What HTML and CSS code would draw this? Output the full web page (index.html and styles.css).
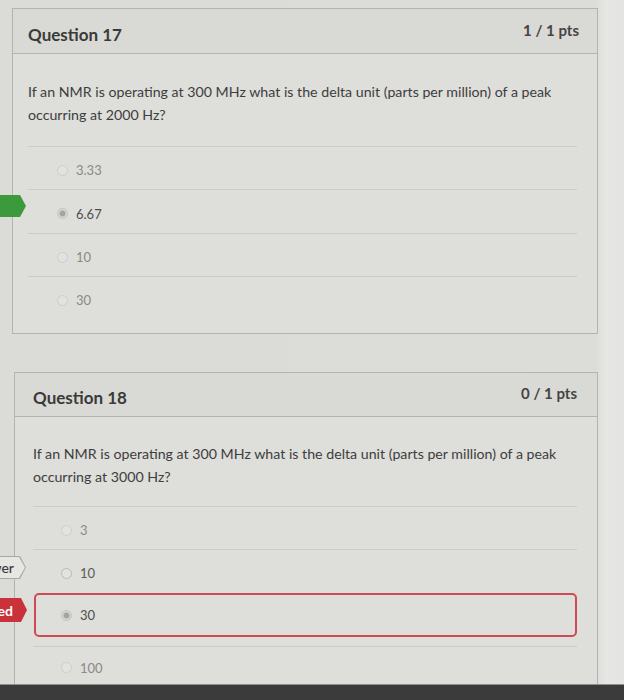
FILE: index.html
```html
<!DOCTYPE html>
<html>
<head>
<meta charset="utf-8">
<link rel="stylesheet" href="styles.css">
</head>
<body>
<div class="screen">
  <div class="page">
    <section class="card q17">
      <div class="tag tag-correct"><span>Correct!</span></div>
      <header class="card-head">
        <h2 class="title">Question 17</h2>
        <div class="pts">1 / 1 pts</div>
      </header>
      <div class="card-body">
        <p class="question">If an NMR is operating at 300 MHz what is the delta unit (parts per million) of a peak occurring at 2000 Hz?</p>
        <ul class="answers">
          <li class="answer"><span class="radio"></span><span class="label">3.33</span></li>
          <li class="answer selected"><span class="radio"></span><span class="label">6.67</span></li>
          <li class="answer"><span class="radio"></span><span class="label">10</span></li>
          <li class="answer"><span class="radio"></span><span class="label">30</span></li>
        </ul>
      </div>
    </section>

    <section class="card q18">
      <div class="tag tag-answer"><div class="tag-inner"><span>Correct Answer</span></div></div>
      <div class="tag tag-wrong"><span>You Answered</span></div>
      <header class="card-head">
        <h2 class="title">Question 18</h2>
        <div class="pts">0 / 1 pts</div>
      </header>
      <div class="card-body">
        <p class="question">If an NMR is operating at 300 MHz what is the delta unit (parts per million) of a peak occurring at 3000 Hz?</p>
        <ul class="answers">
          <li class="answer"><span class="radio"></span><span class="label">3</span></li>
          <li class="answer dim-none"><span class="radio"></span><span class="label">10</span></li>
          <li class="answer selected wrong"><span class="radio"></span><span class="label">30</span></li>
          <li class="answer"><span class="radio"></span><span class="label">100</span></li>
        </ul>
      </div>
    </section>
  </div>
  <div class="bezel"></div>
</div>
</body>
</html>
```

FILE: styles.css
```css
* { box-sizing: border-box; }
html, body { margin: 0; padding: 0; }
body {
  font-family: Lato, "Open Sans", "Liberation Sans", sans-serif;
  background: #dbdbd7;
  color: #3e3e3e;
}
.screen {
  width: 624px;
  height: 700px;
  display: flex;
  flex-direction: column;
  overflow: hidden;
  background: linear-gradient(to right, #dbdbd7 0, #dcdcd8 596px, #e6e6e4 606px, #e4e4e2 624px);
}
.page {
  flex: 1;
  overflow: hidden;
  display: flex;
  flex-direction: column;
  padding-top: 8px;
}
.bezel {
  height: 16px;
  background: #3a3b3a;
  border-top: 1px solid #8e8f8d;
}
.card {
  position: relative;
  border: 1px solid #b3b3af;
  background: #dededa;
}
.q17 { margin-left: 12px; width: 586px; }
.q18 { margin-left: 14px; width: 584px; margin-top: 38px; }

.card-head {
  display: flex;
  justify-content: space-between;
  align-items: flex-start;
  background: #d9d9d5;
  border-bottom: 1px solid #b3b3af;
}
.q17 .card-head { height: 45px; padding: 0 18px 0 15px; }
.q18 .card-head { height: 44px; padding: 0 20px 0 18px; }
.title {
  margin: 0;
  font-size: 17px;
  font-weight: 700;
  color: #3a3a3a;
  line-height: 20px;
  padding-top: 16px;
}
.pts {
  font-size: 15px;
  font-weight: 700;
  color: #454545;
  line-height: 18px;
  padding-top: 12px;
}
.q18 .title { padding-top: 15px; }
.q18 .pts { padding-top: 11px; }

.question {
  margin: 0;
  font-size: 14.2px;
  line-height: 22.5px;
  color: #3d3d3d;
}
.q17 .card-body { padding: 27px 20px 14px 15px; }
.q18 .card-body { padding: 26px 20px 12px 18px; }
.q17 .question { margin-bottom: 20px; }
.q18 .question { margin-bottom: 18px; }

.answers {
  list-style: none;
  margin: 0;
  padding: 0;
}
.answer {
  position: relative;
  display: flex;
  align-items: center;
  height: 43px;
  border-top: 1px solid #cbcbc7;
  padding-left: 29px;
  padding-top: 4px;
  font-size: 13px;
  color: #8a8a88;
}
.q17 .answer:nth-child(2) { height: 44px; }
.q18 .answer { padding-left: 28px; }
.radio {
  width: 11px;
  height: 11px;
  border-radius: 50%;
  border: 1px solid #cdcdc9;
  background: #e2e2de;
  margin-right: 8px;
  flex: none;
}
.answer.dim-none { color: #5a5a5a; }
.answer.dim-none .radio { border-color: #b9b9b5; }
.answer.selected { color: #4e4e4e; }
.answer.selected .radio {
  border-color: #c3c3bf;
  background: radial-gradient(circle, #a4a4a2 0, #a4a4a2 2.5px, #d6d6d2 3.5px);
}
.answer.wrong {
  border-top: none;
  height: 44px;
  padding-top: 0;
  margin-top: 1px;
}
.answer.wrong::before {
  content: "";
  position: absolute;
  left: 1px;
  right: 0;
  top: 0;
  bottom: 0;
  border: 2px solid #cf4a55;
  border-radius: 5px;
}
.answer.wrong + .answer { margin-top: 9px; height: 38px; }

.tag {
  position: absolute;
  display: flex;
  align-items: center;
  justify-content: flex-end;
  font-size: 14px;
  font-weight: 700;
  white-space: nowrap;
  clip-path: polygon(0 0, calc(100% - 6px) 0, 100% 50%, calc(100% - 6px) 100%, 0 100%);
}
.tag span { padding-right: 9px; }
.tag-correct {
  width: 110px;
  height: 22px;
  left: -97px;
  top: 186px;
  background: #3d9a3c;
  color: #3d9a3c;
}
.tag-answer {
  width: 120px;
  height: 23px;
  left: -109px;
  top: 183px;
  background: #a8a8a4;
}
.tag-answer .tag-inner {
  position: absolute;
  left: 0; top: 1px; right: 1px; bottom: 1px;
  background: #e6e6e2;
  color: #3a3a3a;
  display: flex;
  align-items: center;
  justify-content: flex-end;
  font-weight: 500;
  clip-path: polygon(0 0, calc(100% - 6px) 0, 100% 50%, calc(100% - 6px) 100%, 0 100%);
}
.tag-answer .tag-inner span { padding-right: 11px; }
.tag-wrong {
  width: 110px;
  height: 24px;
  left: -98px;
  top: 225px;
  background: #c9313b;
  color: #ffffff;
}
.tag-wrong span { padding-right: 14px; }
```
